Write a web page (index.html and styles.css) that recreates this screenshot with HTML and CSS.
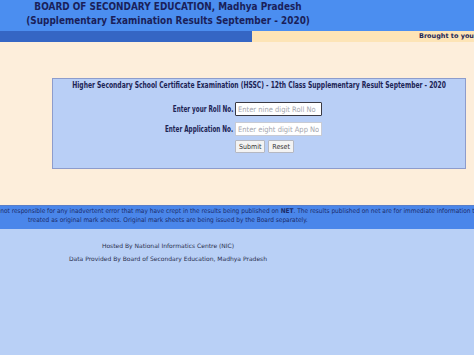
FILE: index.html
```html
<!DOCTYPE html>
<html lang="en">
<head>
  <meta charset="UTF-8">
  <title>MPBSE Supplementary Result September 2020</title>
  <link rel="stylesheet" href="styles.css">
</head>
<body>
  <!-- Title band -->
  <div class="top">
    <h1>
      <span class="squeeze">BOARD OF SECONDARY EDUCATION, Madhya Pradesh</span>
      <span class="squeeze">(Supplementary Examination Results September - 2020)</span>
    </h1>
  </div>

  <div class="strip">
    <div class="strip-left"></div>
    <div class="strip-right">Brought to you</div>
  </div>

  <!-- Result form -->
  <div class="content">
    <form class="result-box" onsubmit="return false;">
      <div class="box-title"><span class="squeeze">Higher Secondary School Certificate Examination (HSSC) - 12th Class Supplementary Result September - 2020</span></div>
      <div class="rows">
        <label for="roll"><span class="squeeze">Enter your Roll No.</span></label>
        <input type="text" id="roll" class="focused" placeholder="Enter nine digit Roll No">
        <label for="appno"><span class="squeeze">Enter Application No.</span></label>
        <input type="text" id="appno" placeholder="Enter eight digit App No">
        <span></span>
        <div class="buttons">
          <button type="submit">Submit</button>
          <button type="reset">Reset</button>
        </div>
      </div>
    </form>
  </div>

  <!-- Disclaimer -->
  <div class="notice">
    <div class="notice-line first">The Board is not responsible for any inadvertent error that may have crept in the results being published on <b>NET</b>. The results published on net are for immediate information to the examinees. These cannot be</div>
    <div class="notice-line">treated as original mark sheets. Original mark sheets are being issued by the Board separately.</div>
  </div>

  <div class="footer">
    <p>Hosted By National Informatics Centre (NIC)</p>
    <p>Data Provided By Board of Secondary Education, Madhya Pradesh</p>
  </div>
</body>
</html>
```

FILE: styles.css
```css
html, body {
  margin: 0;
  padding: 0;
}
body {
  width: 474px;
  height: 355px;
  overflow: hidden;
  background-color: #b9d0f6;
  font-family: "DejaVu Sans", sans-serif;
  color: #1c2455;
}
.squeeze {
  display: inline-block;
  white-space: nowrap;
}
.top {
  height: 31px;
  background-color: #4b8ef0;
}
.top h1 {
  margin: 0;
  width: 336px;
  display: flex;
  flex-direction: column;
  align-items: center;
  font-size: 11px;
  line-height: 14px;
  font-weight: bold;
  color: #1a1f5a;
}
.top h1 .squeeze {
  transform: scaleX(0.81);
}
.strip {
  display: flex;
  height: 11px;
}
.strip-left {
  width: 252px;
  background-color: #3566c4;
}
.strip-right {
  flex: 1;
  background-color: #fde4b6;
  font-size: 6.5px;
  font-weight: bold;
  line-height: 11px;
  white-space: nowrap;
  text-align: right;
}
.content {
  height: 163px;
  background-color: #fdeedb;
  padding-top: 36px;
  box-sizing: border-box;
}
.result-box {
  margin: 0 0 0 52px;
  width: 414px;
  height: 91px;
  box-sizing: border-box;
  background-color: #b9cff6;
  border: 1px solid #8d9ccc;
  padding-top: 2px;
}
.box-title {
  display: flex;
  justify-content: center;
  font-size: 8px;
  font-weight: bold;
  line-height: 10px;
}
.box-title .squeeze {
  transform: scaleX(0.75);
}
.rows {
  display: grid;
  grid-template-columns: 180px 87px;
  column-gap: 2px;
  row-gap: 6px;
  margin-top: 11px;
  align-items: center;
}
.rows label {
  display: flex;
  justify-content: flex-end;
  font-size: 8px;
  font-weight: bold;
}
.rows label .squeeze {
  transform: scaleX(0.71);
  transform-origin: right center;
}
.rows input {
  height: 14px;
  box-sizing: border-box;
  width: 87px;
  border: 1px solid #c8cbd4;
  background: #fff;
  font-family: inherit;
  font-stretch: condensed;
  font-size: 7.5px;
  padding: 0 2px;
  color: #333;
}
.rows input::placeholder {
  color: #a4a6ae;
}
.rows input.focused {
  border: 1px solid #3a3a44;
  border-radius: 1px;
}
.buttons {
  display: flex;
  gap: 3px;
  margin-top: -2px;
}
.buttons button {
  height: 13px;
  padding: 0 3px;
  font-family: inherit;
  font-stretch: condensed;
  font-size: 7px;
  color: #333;
  background: #f3f3f3;
  border: 1px solid #b5b8c2;
  border-radius: 1px;
}
.notice {
  height: 24px;
  background-color: #4a86ea;
  border-top: 1px solid #5a7fc8;
  box-sizing: border-box;
  padding-top: 1px;
  font-stretch: condensed;
  font-size: 6.5px;
  line-height: 9px;
  color: #1b2c6b;
}
.notice-line {
  white-space: nowrap;
  padding-left: 28px;
}
.notice-line.first {
  padding-left: 0;
  margin-left: -38px;
}
.footer {
  padding-top: 10px;
  width: 336px;
  text-align: center;
  font-size: 6px;
  line-height: 13px;
  color: #2a2f4e;
}
.footer p {
  margin: 0;
}
```
